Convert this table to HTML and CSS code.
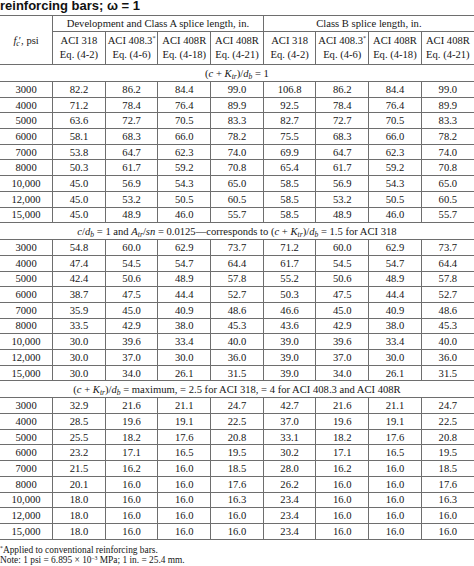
FILE: index.html
```html
<!DOCTYPE html>
<html lang="en">
<head>
<meta charset="utf-8">
<title>Development and splice lengths</title>
<link rel="stylesheet" href="styles.css">
</head>
<body>
<div class="caption">reinforcing bars; ω = 1</div>
<table class="data">
  <thead>
    <tr class="h1">
      <th rowspan="2" class="fc"><i>f</i><sub><i>c</i></sub><span class="prime">′</span>, psi</th>
      <th colspan="4">Development and Class A splice length, in.</th>
      <th colspan="4">Class B splice length, in.</th>
    </tr>
    <tr class="h2">
      <th>ACI 318<br>Eq. (4-2)</th>
      <th>ACI 408.3<sup>*</sup><br>Eq. (4-6)</th>
      <th>ACI 408R<br>Eq. (4-18)</th>
      <th>ACI 408R<br>Eq. (4-21)</th>
      <th>ACI 318<br>Eq. (4-2)</th>
      <th>ACI 408.3<sup>*</sup><br>Eq. (4-6)</th>
      <th>ACI 408R<br>Eq. (4-18)</th>
      <th>ACI 408R<br>Eq. (4-21)</th>
    </tr>
  </thead>
  <tbody>
    <tr class="sec"><td colspan="9">(<i>c</i> + <i>K</i><sub><i>tr</i></sub>)/<i>d</i><sub><i>b</i></sub> = 1</td></tr>
    <tr><td>3000</td><td>82.2</td><td>86.2</td><td>84.4</td><td>99.0</td><td>106.8</td><td>86.2</td><td>84.4</td><td>99.0</td></tr>
    <tr><td>4000</td><td>71.2</td><td>78.4</td><td>76.4</td><td>89.9</td><td>92.5</td><td>78.4</td><td>76.4</td><td>89.9</td></tr>
    <tr><td>5000</td><td>63.6</td><td>72.7</td><td>70.5</td><td>83.3</td><td>82.7</td><td>72.7</td><td>70.5</td><td>83.3</td></tr>
    <tr><td>6000</td><td>58.1</td><td>68.3</td><td>66.0</td><td>78.2</td><td>75.5</td><td>68.3</td><td>66.0</td><td>78.2</td></tr>
    <tr><td>7000</td><td>53.8</td><td>64.7</td><td>62.3</td><td>74.0</td><td>69.9</td><td>64.7</td><td>62.3</td><td>74.0</td></tr>
    <tr><td>8000</td><td>50.3</td><td>61.7</td><td>59.2</td><td>70.8</td><td>65.4</td><td>61.7</td><td>59.2</td><td>70.8</td></tr>
    <tr><td>10,000</td><td>45.0</td><td>56.9</td><td>54.3</td><td>65.0</td><td>58.5</td><td>56.9</td><td>54.3</td><td>65.0</td></tr>
    <tr><td>12,000</td><td>45.0</td><td>53.2</td><td>50.5</td><td>60.5</td><td>58.5</td><td>53.2</td><td>50.5</td><td>60.5</td></tr>
    <tr><td>15,000</td><td>45.0</td><td>48.9</td><td>46.0</td><td>55.7</td><td>58.5</td><td>48.9</td><td>46.0</td><td>55.7</td></tr>
    <tr class="sec"><td colspan="9"><i>c</i>/<i>d</i><sub><i>b</i></sub> = 1 and <i>A</i><sub><i>tr</i></sub>/<i>sn</i> = 0.0125—corresponds to (<i>c</i> + <i>K</i><sub><i>tr</i></sub>)/<i>d</i><sub><i>b</i></sub> = 1.5 for ACI 318</td></tr>
    <tr><td>3000</td><td>54.8</td><td>60.0</td><td>62.9</td><td>73.7</td><td>71.2</td><td>60.0</td><td>62.9</td><td>73.7</td></tr>
    <tr><td>4000</td><td>47.4</td><td>54.5</td><td>54.7</td><td>64.4</td><td>61.7</td><td>54.5</td><td>54.7</td><td>64.4</td></tr>
    <tr><td>5000</td><td>42.4</td><td>50.6</td><td>48.9</td><td>57.8</td><td>55.2</td><td>50.6</td><td>48.9</td><td>57.8</td></tr>
    <tr><td>6000</td><td>38.7</td><td>47.5</td><td>44.4</td><td>52.7</td><td>50.3</td><td>47.5</td><td>44.4</td><td>52.7</td></tr>
    <tr><td>7000</td><td>35.9</td><td>45.0</td><td>40.9</td><td>48.6</td><td>46.6</td><td>45.0</td><td>40.9</td><td>48.6</td></tr>
    <tr><td>8000</td><td>33.5</td><td>42.9</td><td>38.0</td><td>45.3</td><td>43.6</td><td>42.9</td><td>38.0</td><td>45.3</td></tr>
    <tr><td>10,000</td><td>30.0</td><td>39.6</td><td>33.4</td><td>40.0</td><td>39.0</td><td>39.6</td><td>33.4</td><td>40.0</td></tr>
    <tr><td>12,000</td><td>30.0</td><td>37.0</td><td>30.0</td><td>36.0</td><td>39.0</td><td>37.0</td><td>30.0</td><td>36.0</td></tr>
    <tr><td>15,000</td><td>30.0</td><td>34.0</td><td>26.1</td><td>31.5</td><td>39.0</td><td>34.0</td><td>26.1</td><td>31.5</td></tr>
    <tr class="sec"><td colspan="9">(<i>c</i> + <i>K</i><sub><i>tr</i></sub>)/<i>d</i><sub><i>b</i></sub> = maximum, = 2.5 for ACI 318, = 4 for ACI 408.3 and ACI 408R</td></tr>
    <tr><td>3000</td><td>32.9</td><td>21.6</td><td>21.1</td><td>24.7</td><td>42.7</td><td>21.6</td><td>21.1</td><td>24.7</td></tr>
    <tr><td>4000</td><td>28.5</td><td>19.6</td><td>19.1</td><td>22.5</td><td>37.0</td><td>19.6</td><td>19.1</td><td>22.5</td></tr>
    <tr><td>5000</td><td>25.5</td><td>18.2</td><td>17.6</td><td>20.8</td><td>33.1</td><td>18.2</td><td>17.6</td><td>20.8</td></tr>
    <tr><td>6000</td><td>23.2</td><td>17.1</td><td>16.5</td><td>19.5</td><td>30.2</td><td>17.1</td><td>16.5</td><td>19.5</td></tr>
    <tr><td>7000</td><td>21.5</td><td>16.2</td><td>16.0</td><td>18.5</td><td>28.0</td><td>16.2</td><td>16.0</td><td>18.5</td></tr>
    <tr><td>8000</td><td>20.1</td><td>16.0</td><td>16.0</td><td>17.6</td><td>26.2</td><td>16.0</td><td>16.0</td><td>17.6</td></tr>
    <tr><td>10,000</td><td>18.0</td><td>16.0</td><td>16.0</td><td>16.3</td><td>23.4</td><td>16.0</td><td>16.0</td><td>16.3</td></tr>
    <tr><td>12,000</td><td>18.0</td><td>16.0</td><td>16.0</td><td>16.0</td><td>23.4</td><td>16.0</td><td>16.0</td><td>16.0</td></tr>
    <tr><td>15,000</td><td>18.0</td><td>16.0</td><td>16.0</td><td>16.0</td><td>23.4</td><td>16.0</td><td>16.0</td><td>16.0</td></tr>
  </tbody>
</table>
<div class="notes">
  <p><sup>*</sup>Applied to conventional reinforcing bars.</p>
  <p>Note: 1 psi = 6.895 × 10<sup>–3</sup> MPa; 1 in. = 25.4 mm.</p>
</div>
</body>
</html>
```

FILE: styles.css
```css
html, body {
  margin: 0;
  padding: 0;
  background: #ffffff;
}
body {
  width: 474px;
  color: #161616;
  font-family: "Liberation Serif", "Times New Roman", serif;
}
.caption {
  font-family: "Liberation Sans", Arial, sans-serif;
  font-weight: bold;
  font-size: 13px;
  line-height: 12px;
  height: 12px;
  margin-bottom: 3px;
  white-space: nowrap;
  color: #111;
}
.data {
  width: 474px;
  table-layout: fixed;
  border-collapse: collapse;
  font-size: 10.6px;
}
.data th,
.data td {
  padding: 0;
  text-align: center;
  vertical-align: middle;
  font-weight: normal;
  border: 1px solid #6e6e6e;
  white-space: nowrap;
  line-height: 13px;
}
.data tr > :first-child { border-left: none; }
.data tr > :last-child { border-right: none; }
.data tr.h1 > th:first-child { border-right: 1px solid #6e6e6e; }
.data .h2 th:last-child { border-right: none; }
.data .h2 th:first-child { border-left: 1px solid #6e6e6e; }
.data tr.h1 { height: 16px; }
.data tr.h2 { height: 33px; }
.data tr.h2 th { line-height: 14px; }
.data tbody tr { height: 15.7px; }
.data tbody tr.sec { height: 17px; }
.data sub {
  font-size: 0.72em;
  vertical-align: -0.28em;
  line-height: 0;
}
.data sup {
  font-size: 0.6em;
  vertical-align: 0.7em;
  line-height: 0;
}
.fc .prime {
  display: inline-block;
  margin-left: -1px;
}
.notes {
  font-size: 9.4px;
  line-height: 10.5px;
  padding-top: 5px;
}
.notes p {
  margin: 0;
  white-space: nowrap;
}
.notes sup {
  font-size: 0.62em;
  vertical-align: 0.6em;
  line-height: 0;
}
```
